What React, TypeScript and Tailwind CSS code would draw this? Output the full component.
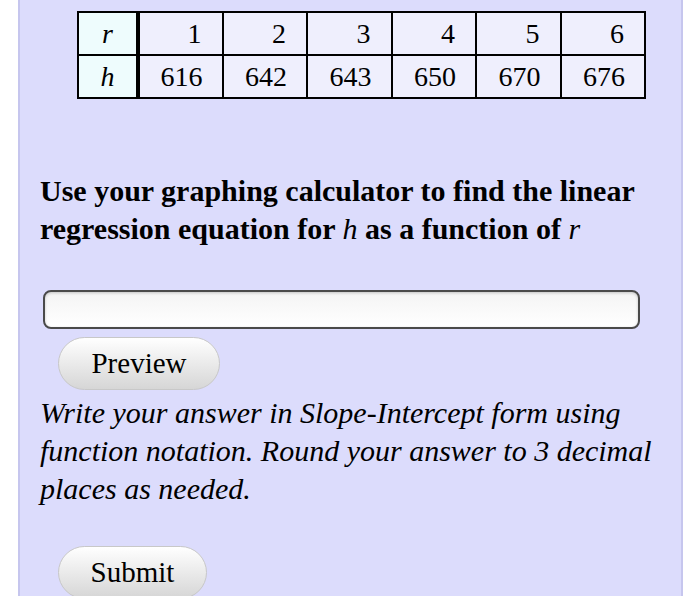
import React from "react";

const cols = [
  { r: "1", h: "616" },
  { r: "2", h: "642" },
  { r: "3", h: "643" },
  { r: "4", h: "650" },
  { r: "5", h: "670" },
  { r: "6", h: "676" },
];

const serif = "font-['Liberation_Serif','DejaVu_Serif',serif]";

export default function App() {
  return (
    <div className="w-[700px] h-[596px] overflow-hidden bg-white font-['Liberation_Serif','DejaVu_Serif',serif]">
      <div className="ml-[18px] w-[665px] h-[596px] border-x-2 border-[#c6c6ee] bg-[#dcdcfc] text-black">
        <div className="pt-[11px] pl-[57px]">
          <table className="border-collapse border-2 border-black font-['Liberation_Serif','DejaVu_Serif',serif] text-[28px] leading-none">
            <tbody>
              <tr className="h-[43px]">
                <td className="w-[60px] border-2 border-r-4 border-black bg-[#eefcfd] text-center italic font-['Liberation_Serif','DejaVu_Serif',serif]">r</td>
                {cols.map((c) => (
                  <td key={c.r} className="w-[84.5px] border-2 border-black bg-[#efeffd] pr-[20px] text-right font-['Liberation_Serif','DejaVu_Serif',serif]">{c.r}</td>
                ))}
              </tr>
              <tr className="h-[43px]">
                <td className="w-[60px] border-2 border-r-4 border-black bg-[#eefcfd] text-center italic font-['Liberation_Serif','DejaVu_Serif',serif]">h</td>
                {cols.map((c) => (
                  <td key={c.r} className="w-[84.5px] border-2 border-black bg-[#efeffd] pr-[19px] text-right font-['Liberation_Serif','DejaVu_Serif',serif]">{c.h}</td>
                ))}
              </tr>
            </tbody>
          </table>
        </div>

        <p className="mt-[73px] pl-[20px] pr-[20px] text-[30px] font-bold leading-[38px] font-['Liberation_Serif','DejaVu_Serif',serif]">
          Use your graphing calculator to find the linear regression equation for{" "}
          <span className="italic font-normal font-['Liberation_Serif','DejaVu_Serif',serif]">h</span> as a function of{" "}
          <span className="italic font-normal font-['Liberation_Serif','DejaVu_Serif',serif]">r</span>
        </p>

        <div className="mt-[42px] ml-[23px] h-[39px] w-[597px] rounded-[8px] border-2 border-[#4a4a4a] bg-gradient-to-b from-[#f4f4f4] to-white shadow-[inset_0_1px_3px_rgba(0,0,0,0.2)]" />

        <button className={`mt-[8px] ml-[38px] flex h-[53px] w-[162px] items-center justify-center rounded-full border border-[#c8c8c8] bg-gradient-to-b from-white to-[#d6d6d6] text-[29px] ${serif}`}>
          Preview
        </button>

        <p className="mt-[4px] w-[650px] pl-[20px] text-[30px] italic leading-[38px] font-['Liberation_Serif','DejaVu_Serif',serif]">
          Write your answer in Slope-Intercept form using function notation. Round your answer to 3 decimal places as needed.
        </p>

        <button className={`mt-[38px] ml-[38px] flex h-[53px] w-[149px] items-center justify-center rounded-full border border-[#c8c8c8] bg-gradient-to-b from-white to-[#d6d6d6] text-[29px] ${serif}`}>
          Submit
        </button>
      </div>
    </div>
  );
}
